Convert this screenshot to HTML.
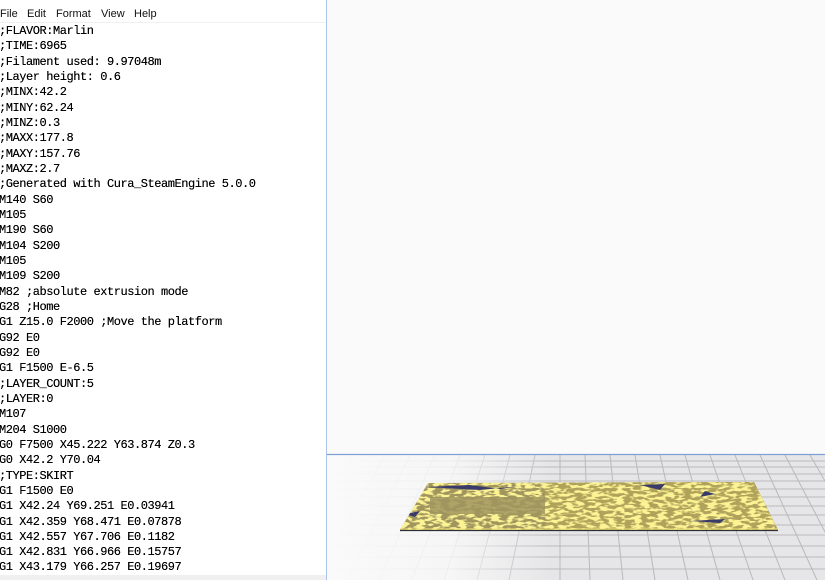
<!DOCTYPE html>
<html><head><meta charset="utf-8"><style>
html,body{margin:0;padding:0;width:825px;height:580px;overflow:hidden;background:#fafafa;position:relative}
#np{position:absolute;left:0;top:0;width:326px;height:580px;background:#fff;border-right:1px solid #a9c4e6}
#menu{position:absolute;left:0;top:0;width:326px;height:22px;border-bottom:1px solid #f0f0f0;font:11px "Liberation Sans",sans-serif;color:#111}
#menu span{position:absolute;top:8px}
#txt{position:absolute;left:-1px;top:24px;font:12px/15.33px "Liberation Mono",monospace;letter-spacing:-0.45px;color:#000;white-space:pre;margin:0;text-shadow:0 0 0.3px #000}
#scr{position:absolute;left:0;top:575px;width:326px;height:5px;background:#f0f0f0}
svg{position:absolute;left:0;top:0}
</style></head><body>
<svg width="825" height="580">
<defs>
<linearGradient id="fade" x1="0" y1="0" x2="1" y2="0">
<stop offset="0" stop-color="#fafafa" stop-opacity="1"/>
<stop offset="0.25" stop-color="#fafafa" stop-opacity="0.8"/>
<stop offset="0.45" stop-color="#fafafa" stop-opacity="0"/>
</linearGradient>
<filter id="spk" x="0" y="0" width="1" height="1">
<feTurbulence type="fractalNoise" baseFrequency="0.12 0.35" numOctaves="2" seed="4"/>
<feColorMatrix type="matrix" values="0 0 0 0 0.97  0 0 0 0 0.9  0 0 0 0 0.3  8 0 0 0 -3.6"/>
</filter>
<clipPath id="pc"><polygon points="428,483 754,482 778,530 400,530"/></clipPath>
</defs>
<rect x="326" y="455" width="499" height="125" fill="#e6e6e8"/>
<g stroke="#b9b9bc" stroke-width="1">
<line x1="326" y1="461" x2="825" y2="461"/><line x1="326" y1="467" x2="825" y2="467"/>
<line x1="326" y1="474" x2="825" y2="474"/><line x1="326" y1="481" x2="825" y2="481"/>
<line x1="326" y1="489" x2="825" y2="489"/><line x1="326" y1="497" x2="825" y2="497"/>
<line x1="326" y1="506" x2="825" y2="506"/><line x1="326" y1="515" x2="825" y2="515"/>
<line x1="326" y1="525" x2="825" y2="525"/><line x1="326" y1="535" x2="825" y2="535"/>
<line x1="326" y1="546" x2="825" y2="546"/><line x1="326" y1="557" x2="825" y2="557"/>
<line x1="326" y1="569" x2="825" y2="569"/>
<line x1="360" y1="455" x2="327" y2="480"/>
<line x1="385" y1="455" x2="315" y2="580"/><line x1="410" y1="455" x2="347" y2="580"/>
<line x1="435" y1="455" x2="379" y2="580"/><line x1="460" y1="455" x2="412" y2="580"/>
<line x1="485" y1="455" x2="444" y2="580"/><line x1="510" y1="455" x2="477" y2="580"/>
<line x1="535" y1="455" x2="509" y2="580"/><line x1="560" y1="455" x2="560" y2="580"/>
<line x1="585" y1="455" x2="590" y2="580"/><line x1="610" y1="455" x2="623" y2="580"/>
<line x1="635" y1="455" x2="655" y2="580"/><line x1="660" y1="455" x2="688" y2="580"/>
<line x1="685" y1="455" x2="720" y2="580"/><line x1="710" y1="455" x2="753" y2="580"/>
<line x1="735" y1="455" x2="785" y2="580"/><line x1="760" y1="455" x2="817" y2="580"/>
<line x1="785" y1="455" x2="850" y2="580"/><line x1="810" y1="455" x2="882" y2="580"/>
</g>
<rect x="326" y="455" width="499" height="125" fill="url(#fade)"/>
<line x1="326" y1="454.5" x2="825" y2="454.5" stroke="#7f9fd6" stroke-width="1.2"/>
<g clip-path="url(#pc)">
<rect x="400" y="480" width="380" height="52" fill="#a1955e"/>
<rect x="545" y="480" width="235" height="52" fill="#b0a25a"/>
<rect x="400" y="480" width="380" height="52" filter="url(#spk)"/>
<rect x="430" y="497" width="115" height="17" fill="#a0955f" opacity="0.85"/>
<path d="M425 487 L470 485 L500 489 L520 486 L480 490 Z" fill="#3a3a6a"/>
<path d="M640 485 L665 484 L660 490 Z M705 491 L715 494 L700 497 Z M690 521 L725 519 L720 523 Z M405 514 L420 511 L415 517 Z" fill="#3a3a6a"/>
</g>
<line x1="400" y1="530.5" x2="778" y2="530.5" stroke="#2e2e35" stroke-width="1.3"/>
<line x1="400" y1="529" x2="778" y2="529" stroke="#f2e87a" stroke-width="1"/>
</svg>
<div id="np">
<div id="menu"><span style="left:0">File</span><span style="left:27px">Edit</span><span style="left:56px">Format</span><span style="left:101px">View</span><span style="left:134px">Help</span></div>
<pre id="txt">;FLAVOR:Marlin
;TIME:6965
;Filament used: 9.97048m
;Layer height: 0.6
;MINX:42.2
;MINY:62.24
;MINZ:0.3
;MAXX:177.8
;MAXY:157.76
;MAXZ:2.7
;Generated with Cura_SteamEngine 5.0.0
M140 S60
M105
M190 S60
M104 S200
M105
M109 S200
M82 ;absolute extrusion mode
G28 ;Home
G1 Z15.0 F2000 ;Move the platform
G92 E0
G92 E0
G1 F1500 E-6.5
;LAYER_COUNT:5
;LAYER:0
M107
M204 S1000
G0 F7500 X45.222 Y63.874 Z0.3
G0 X42.2 Y70.04
;TYPE:SKIRT
G1 F1500 E0
G1 X42.24 Y69.251 E0.03941
G1 X42.359 Y68.471 E0.07878
G1 X42.557 Y67.706 E0.1182
G1 X42.831 Y66.966 E0.15757
G1 X43.179 Y66.257 E0.19697</pre>
<div id="scr"></div>
</div>
</body></html>
